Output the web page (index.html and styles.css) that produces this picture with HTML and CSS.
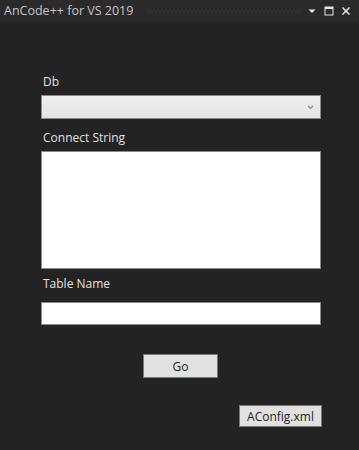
FILE: index.html
```html
<!DOCTYPE html>
<html>
<head>
<meta charset="utf-8">
<link rel="stylesheet" href="styles.css">
</head>
<body>
<div class="window">
  <div class="titlebar">
    <span class="title">AnCode++ for VS 2019</span>
    <span class="grip"></span>
    <span class="controls">
      <svg class="ctl" width="10" height="10" viewBox="0 0 10 10"><path d="M1.5 3.5h7l-3.5 3.5z" fill="#e6e6e6"/></svg>
      <svg class="ctl" width="10" height="10" viewBox="0 0 10 10"><rect x="1" y="1" width="8" height="8" fill="none" stroke="#e6e6e6" stroke-width="1"/><rect x="1" y="1" width="8" height="2" fill="#e6e6e6"/></svg>
      <svg class="ctl" width="10" height="10" viewBox="0 0 10 10"><path d="M1.5 1.5l7 7M8.5 1.5l-7 7" stroke="#e6e6e6" stroke-width="1.5"/></svg>
    </span>
  </div>
  <div class="content">
    <div class="label label-db">Db</div>
    <div class="combo">
      <svg width="7" height="5" viewBox="0 0 7 5"><path d="M1 1l2.5 2.5 2.5-2.5" fill="none" stroke="#8a8a8a" stroke-width="1.2"/></svg>
    </div>
    <div class="label label-cs">Connect String</div>
    <div class="textarea"></div>
    <div class="label label-tn">Table Name</div>
    <div class="input"></div>
    <div class="go-row"><div class="btn go">Go</div></div>
    <div class="cfg-row"><div class="btn cfg">AConfig.xml</div></div>
  </div>
</div>
</body>
</html>
```
FILE: styles.css
```css
html, body {
  margin: 0;
  padding: 0;
  background: #232323;
}
.window {
  width: 359px;
  height: 450px;
  background: #232323;
  font-family: "Open Sans", "Noto Sans", sans-serif;
  overflow: hidden;
}
.titlebar {
  height: 22px;
  background: #2a2a2b;
  display: flex;
  align-items: center;
}
.title {
  color: #c4c4c4;
  font-size: 12.5px;
  padding-left: 4px;
  white-space: nowrap;
  line-height: 22px;
}
.grip {
  flex: 1;
  height: 4px;
  margin: 0 6px 0 14px;
  background-image: conic-gradient(#323233 25%, transparent 0 50%, #323233 0 75%, transparent 0);
  background-size: 4px 4px;
}
.controls {
  display: flex;
  align-items: center;
  gap: 7px;
  padding-right: 8px;
}
.ctl { display: block; }
.content {
  display: flex;
  flex-direction: column;
  padding-left: 41px;
  width: 280px;
}
.label {
  color: #e2e2e2;
  font-size: 12px;
  line-height: 16px;
  padding-left: 2px;
}
.label-db { margin-top: 52px; }
.label-cs { margin-top: 11px; }
.label-tn { margin-top: 7px; }
.combo {
  margin-top: 5px;
  height: 22px;
  border: 1px solid #8a8a8a;
  background: linear-gradient(#efefef, #e4e4e4);
  display: flex;
  align-items: center;
  justify-content: flex-end;
  padding-right: 6px;
}
.textarea {
  margin-top: 5px;
  height: 116px;
  border: 1px solid #8a8a8a;
  background: #ffffff;
}
.input {
  margin-top: 10px;
  height: 21px;
  border: 1px solid #8a8a8a;
  background: #ffffff;
}
.go-row {
  display: flex;
  padding-left: 102px;
  margin-top: 29px;
}
.btn {
  border: 1px solid #7a7a7a;
  background: #e1e1e1;
  color: #1e1e1e;
  font-size: 12px;
  display: flex;
  align-items: center;
  justify-content: center;
  box-sizing: border-box;
}
.go {
  width: 75px;
  height: 24px;
}
.cfg-row {
  display: flex;
  justify-content: flex-end;
  margin-top: 27px;
  margin-right: -1px;
}
.cfg {
  width: 83px;
  height: 22px;
}
```
